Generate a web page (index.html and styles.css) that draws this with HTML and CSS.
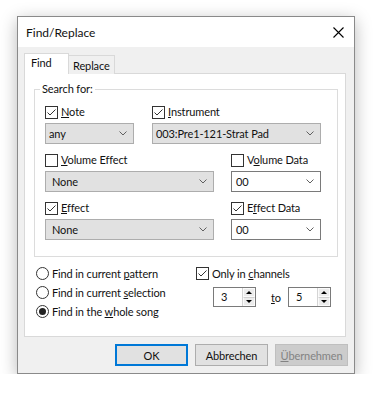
FILE: index.html
```html
<!DOCTYPE html>
<html>
<head>
<meta charset="utf-8">
<link rel="stylesheet" href="styles.css">
</head>
<body>
<div class="win">
  <div class="titlebar">
    <span class="title">Find/Replace</span>
    <svg class="close" width="11" height="11" viewBox="0 0 11 11"><path d="M0.5 0.5 L10.5 10.5 M10.5 0.5 L0.5 10.5" stroke="#000" stroke-width="1.1" fill="none"/></svg>
  </div>
  <div class="body">
    <div class="tabs">
      <div class="tab sel">Find</div>
      <div class="tab">Replace</div>
    </div>
    <div class="panel">
      <fieldset class="group">
        <legend>Search for:</legend>
        <div class="gin">
          <div class="frow">
            <div class="field w89">
              <div class="lab"><span class="cb on"></span><span><u>N</u>ote</span></div>
              <div class="combo grey p3"><span class="val">any</span><span class="chev"></span></div>
            </div>
            <div class="field w169 ml18">
              <div class="lab"><span class="cb on"></span><span><u>I</u>nstrument</span></div>
              <div class="combo grey p3"><span class="val">003:Pre1-121-Strat Pad</span><span class="chev"></span></div>
            </div>
          </div>
          <div class="frow">
            <div class="field w169">
              <div class="lab"><span class="cb"></span><span><u>V</u>olume Effect</span></div>
              <div class="combo grey p6"><span class="val">None</span><span class="chev"></span></div>
            </div>
            <div class="field w90 ml17">
              <div class="lab"><span class="cb"></span><span>V<u>o</u>lume Data</span></div>
              <div class="combo white p5"><span class="val">00</span><span class="chev"></span></div>
            </div>
          </div>
          <div class="frow">
            <div class="field w169">
              <div class="lab"><span class="cb on"></span><span><u>E</u>ffect</span></div>
              <div class="combo grey p6"><span class="val">None</span><span class="chev"></span></div>
            </div>
            <div class="field w90 ml17">
              <div class="lab"><span class="cb on"></span><span>E<u>f</u>fect Data</span></div>
              <div class="combo white p5"><span class="val">00</span><span class="chev"></span></div>
            </div>
          </div>
        </div>
      </fieldset>
      <div class="lower">
        <div class="radios">
          <div class="rrow"><span class="rb"></span><span>Find in current <u>p</u>attern</span></div>
          <div class="rrow"><span class="rb"></span><span>Find in current <u>s</u>election</span></div>
          <div class="rrow"><span class="rb on"></span><span>Find in the <u>w</u>hole song</span></div>
        </div>
        <div class="chan">
          <div class="rrow"><span class="cb on"></span><span>Only in <u>c</u>hannels</span></div>
          <div class="spinrow">
            <div class="spin"><span class="sval">3</span><div class="sbtns"><div class="sb"><span class="up"></span></div><div class="sb"><span class="dn"></span></div></div></div>
            <span class="to"><u>t</u>o</span>
            <div class="spin"><span class="sval">5</span><div class="sbtns"><div class="sb"><span class="up"></span></div><div class="sb"><span class="dn"></span></div></div></div>
          </div>
        </div>
      </div>
    </div>
    <div class="buttons">
      <div class="btn def">OK</div>
      <div class="btn">Abbrechen</div>
      <div class="btn dis"><u>Ü</u>bernehmen</div>
    </div>
  </div>
</div>
</body>
</html>
```
FILE: styles.css
```css
* { box-sizing: border-box; }
body {
  margin: 0;
  background: #fff;
  font-family: "Lato", "Noto Sans", sans-serif;
  font-size: 11px;
  letter-spacing: -0.12px;
  color: #111;
}
u { text-decoration: underline; text-underline-offset: 1px; }
.win {
  margin: 16px 0 0 17px;
  width: 338px;
  height: 358px;
  border: 1px solid #8a8a8a;
  background: #f0f0f0;
  box-shadow: 0 4px 16px rgba(0,0,0,0.28);
  display: flex;
  flex-direction: column;
}
.titlebar {
  height: 30px;
  background: #fff;
  display: flex;
  align-items: center;
  justify-content: space-between;
  padding: 0 10px 0 8px;
}
.title { font-size: 12px; letter-spacing: 0; }
.close { display: block; }
.body {
  flex: 1;
  padding: 6px 0 0 6px;
  display: flex;
  flex-direction: column;
}
.tabs {
  display: flex;
  align-items: flex-end;
  height: 21px;
  position: relative;
  z-index: 1;
}
.tab {
  height: 19px;
  width: 47px;
  margin-left: -1px;
  border: 1px solid #d9d9d9;
  border-bottom: none;
  background: #f0f0f0;
  padding: 3px 0 0 4px;
  line-height: 14px;
}
.tab.sel {
  height: 21px;
  width: 45px;
  margin-left: 0;
  background: #fff;
  padding: 2px 0 0 6px;
  z-index: 2;
}
.panel {
  margin-top: -1px;
  width: 322px;
  height: 264px;
  border: 1px solid #d9d9d9;
  background: #fff;
}
.group {
  margin: 8px 0 0 9px;
  padding: 0;
  width: 304px;
  min-width: 0;
  border: 1px solid #dcdcdc;
}
.group legend {
  margin-left: 5px;
  padding: 0 2px;
  line-height: 14px;
}
.gin {
  padding: 9px 0 16px 10px;
  display: flex;
  flex-direction: column;
  gap: 9px;
}
.frow { display: flex; }
.field { display: flex; flex-direction: column; gap: 4px; }
.w89 { width: 89px; }
.w90 { width: 90px; }
.w169 { width: 169px; }
.ml18 { margin-left: 18px; }
.ml17 { margin-left: 17px; }
.lab, .rrow {
  display: flex;
  align-items: center;
  height: 14px;
  line-height: 14px;
  gap: 3px;
}
.cb {
  width: 13px;
  height: 13px;
  border: 1px solid #333;
  background: #fff;
  flex: none;
}
.cb.on {
  background: #fff url("data:image/svg+xml,%3Csvg xmlns='http://www.w3.org/2000/svg' width='11' height='11'%3E%3Cpath d='M1.5 5.5 L4 8 L9.5 2.5' stroke='%23333' stroke-width='1' fill='none'/%3E%3C/svg%3E") no-repeat center;
}
.combo {
  height: 21px;
  display: flex;
  align-items: center;
  justify-content: space-between;
  padding-right: 6px;
}
.combo.grey { background: #e1e1e1; border: 1px solid #adadad; }
.combo.white { background: #fff; border: 1px solid #7a7a7a; }
.p3 { padding-left: 3px; }
.p5 { padding-left: 4px; }
.p6 { padding-left: 6px; }
.chev {
  width: 8px;
  height: 5px;
  background: url("data:image/svg+xml,%3Csvg xmlns='http://www.w3.org/2000/svg' width='8' height='5'%3E%3Cpath d='M0.5 0.5 L4 4 L7.5 0.5' stroke='%23606060' stroke-width='1' fill='none'/%3E%3C/svg%3E") no-repeat;
}
.lower {
  display: flex;
  margin-top: 7px;
}
.radios {
  margin-left: 11px;
  width: 160px;
  display: flex;
  flex-direction: column;
}
.rrow { height: 19px; }
.rb {
  width: 13px;
  height: 13px;
  border: 1px solid #333;
  border-radius: 50%;
  background: #fff;
  flex: none;
  display: flex;
  align-items: center;
  justify-content: center;
}
.rb.on::after {
  content: "";
  width: 7px;
  height: 7px;
  border-radius: 50%;
  background: #222;
}
.chan { display: flex; flex-direction: column; }
.spinrow {
  display: flex;
  align-items: center;
  margin-top: 4px;
  margin-left: 17px;
}
.spin {
  width: 43px;
  height: 20px;
  border: 1px solid #7a7a7a;
  background: #fff;
  display: flex;
}
.sval { flex: 1; padding-left: 7px; line-height: 18px; }
.sbtns {
  width: 13px;
  display: flex;
  flex-direction: column;
  border-left: 1px solid #d4d4d4;
}
.sb {
  flex: 1;
  background: #ececec;
  border: 1px solid #fbfbfb;
  display: flex;
  align-items: center;
  justify-content: center;
}
.sb + .sb { border-top: 1px solid #d0d0d0; }
.up { width: 0; height: 0; border-left: 3px solid transparent; border-right: 3px solid transparent; border-bottom: 3px solid #000; }
.dn { width: 0; height: 0; border-left: 3px solid transparent; border-right: 3px solid transparent; border-top: 3px solid #000; }
.to { margin: 0 7px 0 15px; }
.buttons {
  display: flex;
  justify-content: flex-end;
  gap: 7px;
  margin-top: 7px;
  padding-right: 6px;
}
.btn {
  width: 73px;
  height: 22px;
  background: #e1e1e1;
  border: 1px solid #adadad;
  display: flex;
  align-items: center;
  justify-content: center;
}
.btn.def { border: 2px solid #0078d7; }
.btn.dis { background: #cccccc; border-color: #bfbfbf; color: #838383; }
```
